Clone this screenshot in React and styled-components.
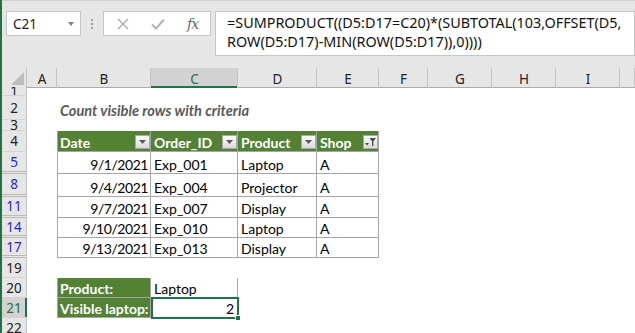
import React from 'react';
import styled, { createGlobalStyle } from 'styled-components';

const Global = createGlobalStyle`
  html, body { margin: 0; padding: 0; background: #fff; }
  body { width: 635px; height: 333px; overflow: hidden; }
  *, *::before, *::after { box-sizing: border-box; }
`;

const GREEN = '#217346';
const TGREEN = '#548235';
const LINE = '#a6a6a6';
const COLS = '25px 30px 94px 87px 79px 62px 49px 64px 64px 64px 1fr';

const Window = styled.div`
  width: 635px;
  height: 333px;
  overflow: hidden;
  border-left: 2px solid ${GREEN};
  display: flex;
  flex-direction: column;
  background: #fff;
`;

const TopBar = styled.div`
  height: 67px;
  flex: none;
  background: #e6e6e6;
  border-top: 1px solid #d2d2d2;
  display: flex;
  align-items: flex-start;
  padding: 10px 0 0 4px;
  font-family: 'Noto Sans', sans-serif;
  font-size: 13.5px;
  color: #222;
`;

const NameBox = styled.div`
  width: 101px;
  height: 25px;
  background: #fff;
  border: 1px solid #c6c6c6;
  display: flex;
  align-items: center;
  justify-content: space-between;
  padding: 0 6px 0 6px;
`;

const Arrow = styled.span`
  width: 0;
  height: 0;
  border-left: 3.5px solid transparent;
  border-right: 3.5px solid transparent;
  border-top: 4px solid #808080;
`;

const Dots = styled.div`
  width: 31px;
  height: 25px;
  display: flex;
  flex-direction: column;
  align-items: center;
  justify-content: center;
  gap: 2px;
  & > span { width: 2px; height: 2px; background: #a0a0a0; }
`;

const FxBox = styled.div`
  width: 109px;
  height: 25px;
  background: #fff;
  border: 1px solid #c6c6c6;
  display: flex;
  align-items: center;
  padding-left: 1px;
`;

const FxSlot = styled.div`
  width: 35px;
  display: flex;
  justify-content: center;
  align-items: center;
`;

const FxText = styled.span`
  font-family: 'DejaVu Serif', serif;
  font-style: italic;
  font-size: 14px;
  color: #6a6a6a;
  letter-spacing: -1px;
`;

const FormulaBox = styled.div`
  margin-left: 4px;
  width: 420px;
  flex: none;
  height: 45px;
  background: #fff;
  border: 1px solid #c6c6c6;
  padding: 1px 0 0 11px;
  line-height: 19px;
  white-space: pre;
  font-size: 14.4px;
  color: #111;
`;

const Row = styled.div`
  display: grid;
  grid-template-columns: ${COLS};
  height: ${(p) => p.$h}px;
  flex: none;
`;

const ColHead = styled.div`
  background: ${(p) => (p.$sel ? '#d2d2d2' : '#e6e6e6')};
  color: ${(p) => (p.$sel ? GREEN : '#222')};
  font-family: 'Noto Sans', sans-serif;
  font-size: 13.5px;
  display: flex;
  align-items: center;
  justify-content: center;
  padding-top: 2px;
  box-shadow: inset -1px 0 0 0 #c4c4c4,
    inset 0 ${(p) => (p.$sel ? '-2px' : '-1px')} 0 0 ${(p) => (p.$sel ? GREEN : '#ababab')};
  background-clip: padding-box;
  border-top: 1px solid #e6e6e6;
`;

const Corner = styled.div`
  background: #e6e6e6;
  box-shadow: inset -1px 0 0 0 #c4c4c4, inset 0 -1px 0 0 #ababab;
  display: flex;
  align-items: flex-end;
  justify-content: flex-end;
  padding: 0 3px 3px 0;
`;

const RowHead = styled.div`
  background: ${(p) => (p.$sel ? '#d2d2d2' : '#e6e6e6')};
  color: ${(p) => (p.$sel ? GREEN : p.$blue ? '#1f1fe0' : '#222')};
  font-family: 'Noto Sans', sans-serif;
  font-size: 13.5px;
  display: flex;
  align-items: center;
  justify-content: center;
  overflow: hidden;
  border-bottom: ${(p) => (p.$double ? '3px double #b8b8b8' : '1px solid #d4d4d4')};
  box-shadow: inset ${(p) => (p.$sel ? '-2px' : '-1px')} 0 0 0 ${(p) => (p.$sel ? GREEN : '#c4c4c4')};
  padding-right: 1px;
`;

const Cell = styled.div`
  position: relative;
  display: flex;
  align-items: flex-end;
  justify-content: ${(p) => (p.$right ? 'flex-end' : p.$between ? 'space-between' : 'flex-start')};
  padding: 0 ${(p) => (p.$right ? '3px' : '1px')} 1px 3px;
  white-space: nowrap;
  font-family: Lato, 'Liberation Sans', sans-serif;
  font-size: ${(p) => (p.$big ? '14.6px' : '14px')};
  letter-spacing: ${(p) => (p.$tight ? '-0.45px' : 'normal')};
  line-height: 16px;
  font-weight: ${(p) => (p.$bold ? 700 : 400)};
  font-style: ${(p) => (p.$italic ? 'italic' : 'normal')};
  color: ${(p) => p.$color || (p.$fill ? '#fff' : '#000')};
  background: ${(p) => (p.$fill ? TGREEN : 'transparent')};
  box-shadow: ${(p) =>
    p.$border
      ? `inset -1px -1px 0 0 ${LINE}${p.$left ? `, inset 1px 0 0 0 ${LINE}` : ''}`
      : 'none'};
`;

const HeadText = styled.span`
  align-self: flex-end;
`;

const FilterBtn = styled.span`
  align-self: center;
  width: 15px;
  height: 14px;
  margin-top: 1px;
  border: 1px solid #a9a9a9;
  background: linear-gradient(#fbfbfb, #dadada);
  display: flex;
  align-items: center;
  justify-content: center;
`;

const Selection = styled.span`
  position: absolute;
  top: -1px;
  left: 0;
  right: -1px;
  bottom: -1px;
  border: 2px solid ${GREEN};
  pointer-events: none;
`;

const Handle = styled.span`
  position: absolute;
  right: -4px;
  bottom: -4px;
  width: 6px;
  height: 6px;
  background: ${GREEN};
  border: 1px solid #fff;
`;

const TriangleIcon = () => (
  <svg width="7" height="4" viewBox="0 0 7 4">
    <path d="M0 0 H7 L3.5 4 Z" fill="#5a5a5a" />
  </svg>
);

const FunnelIcon = () => (
  <svg width="13" height="12" viewBox="0 0 13 12">
    <path d="M1 7 H5 L3 9.5 Z" fill="#4a4a4a" />
    <path d="M5.5 2 H12 L9.4 5.4 V10 H8.1 V5.4 Z" fill="#4a4a4a" />
  </svg>
);

const columnLetters = ['A', 'B', 'C', 'D', 'E', 'F', 'G', 'H', 'I', ''];

const tableRows = [
  { n: 5, h: 22, d: ['9/1/2021', 'Exp_001', 'Laptop', 'A'] },
  { n: 8, h: 23, d: ['9/4/2021', 'Exp_004', 'Projector', 'A'] },
  { n: 11, h: 21, d: ['9/7/2021', 'Exp_007', 'Display', 'A'] },
  { n: 14, h: 20, d: ['9/10/2021', 'Exp_010', 'Laptop', 'A'] },
  { n: 17, h: 20, d: ['9/13/2021', 'Exp_013', 'Display', 'A'] },
];

const Empty = ({ count }) =>
  Array.from({ length: count }).map((_, i) => <Cell key={`e${i}`} />);

export default function App() {
  return (
    <>
      <Global />
      <Window>
        <TopBar>
          <NameBox>
            <span>C21</span>
            <Arrow />
          </NameBox>
          <Dots>
            <span />
            <span />
            <span />
          </Dots>
          <FxBox>
            <FxSlot>
              <svg width="12" height="12" viewBox="0 0 12 12">
                <path d="M1 1 L11 11 M11 1 L1 11" stroke="#ababab" strokeWidth="1.4" />
              </svg>
            </FxSlot>
            <FxSlot>
              <svg width="14" height="12" viewBox="0 0 14 12">
                <path d="M1 6.5 L5 10.5 L13 1.5" stroke="#b4b4b4" strokeWidth="2" fill="none" />
              </svg>
            </FxSlot>
            <FxSlot>
              <FxText>fx</FxText>
            </FxSlot>
          </FxBox>
          <FormulaBox>
            {'=SUMPRODUCT((D5:D17=C20)*(SUBTOTAL(103,OFFSET(D5,\nROW(D5:D17)-MIN(ROW(D5:D17)),0))))'}
          </FormulaBox>
        </TopBar>

        <Row $h={20}>
          <Corner>
            <svg width="13" height="13" viewBox="0 0 13 13">
              <path d="M13 0 V13 H0 Z" fill="#bdbdbd" />
            </svg>
          </Corner>
          {columnLetters.map((c, i) => (
            <ColHead key={i} $sel={c === 'C'}>
              {c}
            </ColHead>
          ))}
        </Row>

        <Row $h={9}>
          <RowHead>1</RowHead>
          <Empty count={10} />
        </Row>
        <Row $h={24}>
          <RowHead>2</RowHead>
          <Cell />
          <Cell $bold $italic $big $color="#595959">
            Count visible rows with criteria
          </Cell>
          <Empty count={8} />
        </Row>
        <Row $h={11}>
          <RowHead>3</RowHead>
          <Empty count={10} />
        </Row>
        <Row $h={21}>
          <RowHead>4</RowHead>
          <Cell />
          {['Date', 'Order_ID', 'Product', 'Shop'].map((t, i) => (
            <Cell key={t} $fill $bold $between $border $left={i === 0}>
              <HeadText>{t}</HeadText>
              <FilterBtn>{t === 'Shop' ? <FunnelIcon /> : <TriangleIcon />}</FilterBtn>
            </Cell>
          ))}
          <Empty count={5} />
        </Row>
        {tableRows.map((r) => (
          <Row key={r.n} $h={r.h}>
            <RowHead $blue $double>
              {r.n}
            </RowHead>
            <Cell />
            <Cell $border $left $right $tight>
              {r.d[0]}
            </Cell>
            <Cell $border>{r.d[1]}</Cell>
            <Cell $border>{r.d[2]}</Cell>
            <Cell $border>{r.d[3]}</Cell>
            <Empty count={5} />
          </Row>
        ))}
        <Row $h={20}>
          <RowHead>19</RowHead>
          <Empty count={10} />
        </Row>
        <Row $h={20}>
          <RowHead>20</RowHead>
          <Cell />
          <Cell $fill $bold $border $left>
            Product:
          </Cell>
          <Cell $border>Laptop</Cell>
          <Empty count={7} />
        </Row>
        <Row $h={20}>
          <RowHead $sel>21</RowHead>
          <Cell />
          <Cell $fill $bold $border $left>
            Visible laptop:
          </Cell>
          <Cell $border $right style={{ paddingRight: 4 }}>
            2
            <Selection>
              <Handle />
            </Selection>
          </Cell>
          <Empty count={7} />
        </Row>
        <Row $h={20}>
          <RowHead>22</RowHead>
          <Empty count={10} />
        </Row>
      </Window>
    </>
  );
}
